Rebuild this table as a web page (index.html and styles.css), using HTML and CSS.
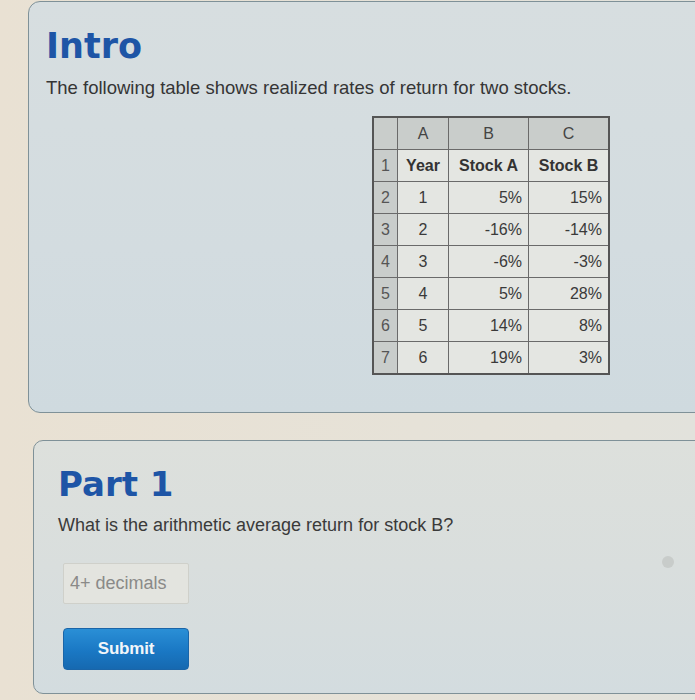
FILE: index.html
```html
<!DOCTYPE html>
<html>
<head>
<meta charset="utf-8">
<link rel="stylesheet" href="styles.css">
</head>
<body>
<div class="page">
  <section class="panel intro">
    <h1 class="title">Intro</h1>
    <p class="lead">The following table shows realized rates of return for two stocks.</p>
    <table class="sheet">
      <tr class="colhead"><th class="rn"></th><th>A</th><th>B</th><th>C</th></tr>
      <tr class="labels"><th class="rn">1</th><td class="c">Year</td><td class="c">Stock A</td><td class="c">Stock B</td></tr>
      <tr><th class="rn">2</th><td class="c">1</td><td>5%</td><td>15%</td></tr>
      <tr><th class="rn">3</th><td class="c">2</td><td>-16%</td><td>-14%</td></tr>
      <tr><th class="rn">4</th><td class="c">3</td><td>-6%</td><td>-3%</td></tr>
      <tr><th class="rn">5</th><td class="c">4</td><td>5%</td><td>28%</td></tr>
      <tr><th class="rn">6</th><td class="c">5</td><td>14%</td><td>8%</td></tr>
      <tr><th class="rn">7</th><td class="c">6</td><td>19%</td><td>3%</td></tr>
    </table>
  </section>
  <section class="panel part">
    <h2 class="title">Part 1</h2>
    <p class="question">What is the arithmetic average return for stock B?</p>
    <input class="answer" type="text" placeholder="4+ decimals">
    <button class="submit" type="button">Submit</button>
    <span class="dot"></span>
  </section>
</div>
</body>
</html>
```

FILE: styles.css
```css
html, body {
  margin: 0;
  padding: 0;
  height: 700px;
  overflow: hidden;
}
body {
  background: linear-gradient(90deg, #e9e1d3 0%, #e6e2d8 60%, #e2e2dc 100%);
  font-family: "Liberation Sans", Arial, sans-serif;
  color: #333;
}
.page {
  display: flex;
  flex-direction: column;
  width: 740px;
}
.panel {
  border: 1px solid #7f9198;
  box-sizing: border-box;
  position: relative;
}
.intro {
  margin: 1px 0 0 28px;
  height: 412px;
  border-radius: 12px;
  background: linear-gradient(180deg, #d7dee0 0%, #d3dce0 60%, #cfdadf 100%);
  padding: 24px 0 0 17px;
}
.part {
  margin: 27px 0 0 33px;
  height: 254px;
  border-radius: 10px;
  background: linear-gradient(180deg, #dde0dc 0%, #d9dedd 50%, #d3dcdf 100%);
  padding: 23px 0 0 24px;
  display: flex;
  flex-direction: column;
  align-items: flex-start;
}
.title {
  margin: 0;
  font-family: "DejaVu Sans", Verdana, sans-serif;
  font-weight: bold;
  font-size: 35px;
  line-height: 40px;
  color: #1e55a6;
}
.part .title { font-size: 34px; }
.lead {
  margin: 12px 0 0 0;
  font-size: 18.5px;
  line-height: 20px;
  color: #353535;
}
.sheet {
  margin: 18px 0 0 326px;
  border-collapse: collapse;
  border: 2px solid #555;
  font-family: "Liberation Sans", Arial, sans-serif;
  font-size: 16px;
  color: #3a3a3a;
  background: #e4e6e2;
}
.sheet th, .sheet td {
  border: 1px solid #6a6a6a;
  height: 31px;
  padding: 0 6px;
  text-align: right;
}
.sheet .colhead th {
  background: #c9cdcb;
  font-weight: normal;
  text-align: center;
  color: #444;
}
.sheet th.rn {
  background: #c9cdcb;
  font-weight: normal;
  text-align: center;
  padding: 0 4px;
  width: 15px;
  color: #555;
}
.sheet td.c { text-align: center; }
.sheet .labels td { font-weight: bold; color: #333; }
.sheet tr > *:nth-child(2) { width: 38px; }
.sheet tr > *:nth-child(3) { width: 67px; }
.sheet tr > *:nth-child(4) { width: 67px; }
.question {
  margin: 11px 0 0 0;
  font-size: 18px;
  line-height: 20px;
  color: #3a3a3a;
}
.answer {
  margin: 28px 0 0 5px;
  width: 126px;
  height: 41px;
  box-sizing: border-box;
  border: 1px solid #cfd0ca;
  border-radius: 2px;
  background: #e3e4df;
  padding: 0 6px;
  font-family: "Liberation Sans", Arial, sans-serif;
  font-size: 18px;
  color: #555;
}
.answer::placeholder { color: #8a8a88; }
.submit {
  margin: 24px 0 0 5px;
  width: 126px;
  height: 42px;
  border: 1px solid #1a65a8;
  border-radius: 4px;
  background: linear-gradient(180deg, #2a8fd6 0%, #1a78c4 55%, #1669b0 100%);
  color: #f2f6fa;
  font-family: "Liberation Sans", Arial, sans-serif;
  font-weight: bold;
  font-size: 17px;
  letter-spacing: -0.2px;
}
.dot {
  position: absolute;
  left: 628px;
  top: 115px;
  width: 12px;
  height: 12px;
  border-radius: 50%;
  background: #c8ccca;
}
```
